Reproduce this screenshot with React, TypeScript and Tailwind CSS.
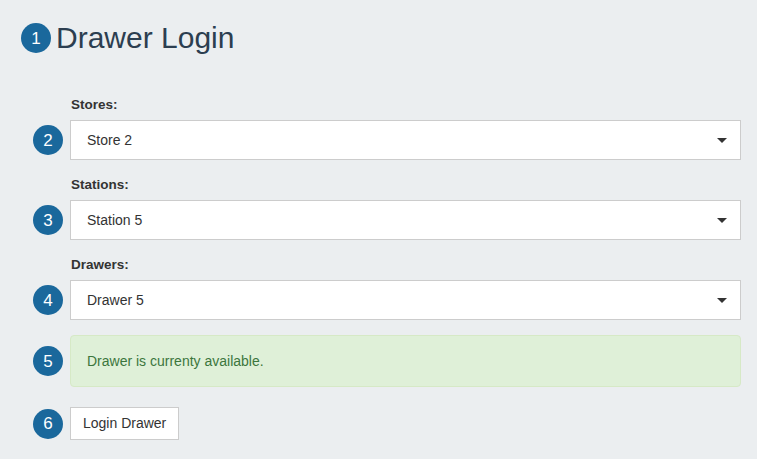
import React from "react";

const font = { fontFamily: '"Liberation Sans", Arial, sans-serif' };

function Badge({ n, className = "" }: { n: number; className?: string }) {
  return (
    <span
      className={`flex h-[30px] w-[30px] shrink-0 items-center justify-center rounded-full bg-[#1a689c] text-[17px] leading-none text-white ${className}`}
    >
      {n}
    </span>
  );
}

function Select({ value }: { value: string }) {
  return (
    <div className="flex h-10 flex-1 items-center justify-between border border-[#cccccc] bg-white pl-4 pr-[13px] text-[14px] text-[#333]">
      <span>{value}</span>
      <span className="h-0 w-0 border-x-[5px] border-t-[5px] border-x-transparent border-t-[#333]" />
    </div>
  );
}

function Group({ label, n, value }: { label: string; n: number; value: string }) {
  return (
    <div className="mb-[15px]">
      <div className="mb-[5px] ml-[50px] text-[13.5px] font-bold leading-5 text-[#333]">{label}</div>
      <div className="flex items-center">
        <Badge n={n} className="ml-[12px] mr-[7px]" />
        <Select value={value} />
      </div>
    </div>
  );
}

export default function App() {
  return (
    <div style={font} className="min-h-screen bg-[#ebeef0] pl-[21px] pr-4 pt-[23px]">
      <div className="flex h-[30px] items-center">
        <Badge n={1} />
        <h1 className="ml-[5px] text-[30px] leading-none text-[#2c3e50]">Drawer Login</h1>
      </div>

      <div className="mt-[42px]">
        <Group label="Stores:" n={2} value="Store 2" />
        <Group label="Stations:" n={3} value="Station 5" />
        <Group label="Drawers:" n={4} value="Drawer 5" />

        <div className="mb-5 flex items-center">
          <Badge n={5} className="ml-[12px] mr-[7px]" />
          <div className="flex-1 rounded border border-[#d6e9c6] bg-[#dff0d8] px-4 py-[15px] text-[14px] leading-5 text-[#3c763d]">
            Drawer is currenty available.
          </div>
        </div>

        <div className="flex items-center">
          <Badge n={6} className="ml-[12px] mr-[7px]" />
          <button className="h-[33px] border border-[#cccccc] bg-white px-3 text-[14px] text-[#333]">
            Login Drawer
          </button>
        </div>
      </div>
    </div>
  );
}
